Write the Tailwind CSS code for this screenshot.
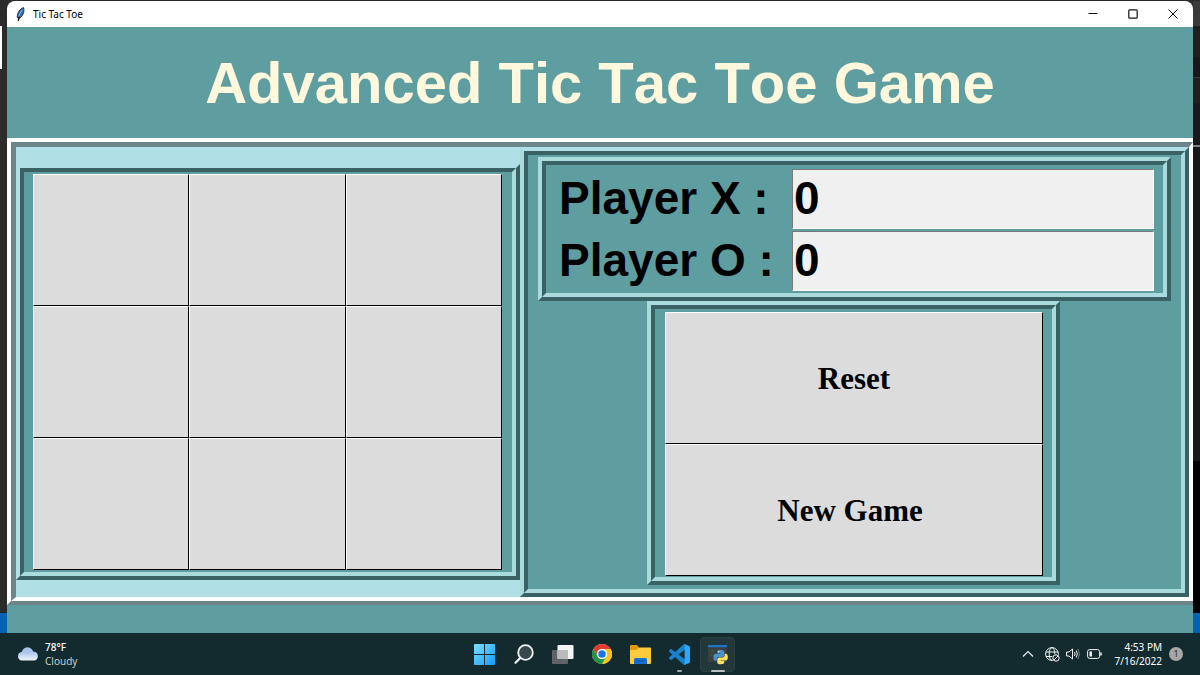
<!DOCTYPE html>
<html lang="en">
<head>
<meta charset="utf-8">
<meta name="viewport" content="width=device-width, initial-scale=1">
<title>Tic Tac Toe</title>
<script src="https://cdn.jsdelivr.net/npm/@tailwindcss/browser@4"></script>
</head>
<body class="min-h-screen flex flex-col bg-[#132b2e] font-['Liberation_Sans',Arial,sans-serif]">

<!-- Desktop with the application window -->
<div class="flex-1 flex bg-[#2b2b2b] pt-px">
  <div class="w-[7px] shrink-0 flex flex-col justify-between">
    <div class="mt-[25px] h-[43px] w-0.5 bg-white"></div>
    <div class="h-5 bg-[#0063b1]"></div>
  </div>

  <div class="flex-1 min-w-0 flex flex-col">
    <header class="h-[26px] flex items-center justify-between bg-white rounded-t-lg pl-[9px]">
      <div class="flex items-center gap-2">
        <svg class="w-[9px] h-[15px]" viewBox="0 0 9 15" aria-hidden="true">
          <path d="M7.600.600C4.200 1.500 1.200 5.500 1.200 10.500L2.800 11.600C6.500 10 8.800 5 7.600.600Z" fill="#2f6db5" stroke="#1c2733" stroke-width=".9"/>
          <path d="M6.600 2.500C4.500 5 3.200 7.500 2.600 10" stroke="#8fbdec" stroke-width="1" fill="none"/>
          <path d="M3.200 9.500L2.200 14" stroke="#111" stroke-width="1.200"/>
        </svg>
        <span class="text-[10px] leading-4 text-black font-['Noto_Sans','Open_Sans',sans-serif]">Tic Tac Toe</span>
      </div>
      <div class="flex h-full">
        <button class="w-10 grid place-items-center" aria-label="Minimize"><svg class="size-[10px]" viewBox="0 0 10 10" stroke="#111" fill="none"><path d="M.500 4.500H9.500"/></svg></button>
        <button class="w-10 grid place-items-center" aria-label="Maximize"><svg class="size-[10px]" viewBox="0 0 10 10" stroke="#111" stroke-width="1.200" fill="none"><rect x=".8" y=".8" width="8.400" height="8.400" rx="1"/></svg></button>
        <button class="w-10 grid place-items-center" aria-label="Close"><svg class="size-[10px]" viewBox="0 0 10 10" stroke="#111" fill="none"><path d="M.500.500L9.500 9.500M9.500.500L.500 9.500"/></svg></button>
      </div>
    </header>

    <main class="flex-1 bg-[#5f9ea0] pb-7">
      <h1 class="h-[111px] flex items-center justify-center text-[58px] leading-none font-bold text-[#fff8dc] [font-kerning:none]">Advanced Tic Tac Toe Game</h1>

      <div class="border-t-4 border-l-4 border-b-4 border-t-white border-l-white border-b-[#6c8589]">
        <div class="border-t-5 border-l-5 border-b-4 border-r-4 border-t-[#6c8589] border-l-[#6c8589] border-b-white border-r-white bg-[#b0dfe5] grid grid-cols-[504fr_669fr]">

          <!-- Board -->
          <section class="self-center border-4 border-t-[#b0dfe5] border-l-[#b0dfe5] border-r-[#3a6163] border-b-[#3a6163]" aria-label="Board">
            <div class="border-4 border-t-[#3a6163] border-l-[#3a6163] border-r-[#a9dadc] border-b-[#a9dadc] bg-[#5f9ea0] py-0.5 pl-[9px] pr-[10px]">
              <div class="grid grid-cols-3 auto-rows-[132px]">
                <button class="bg-[#dcdcdc] border border-t-white border-l-white border-r-black border-b-black" aria-label="Row 1, column 1"></button>
                <button class="bg-[#dcdcdc] border border-t-white border-l-white border-r-black border-b-black" aria-label="Row 1, column 2"></button>
                <button class="bg-[#dcdcdc] border border-t-white border-l-white border-r-black border-b-black" aria-label="Row 1, column 3"></button>
                <button class="bg-[#dcdcdc] border border-t-white border-l-white border-r-black border-b-black" aria-label="Row 2, column 1"></button>
                <button class="bg-[#dcdcdc] border border-t-white border-l-white border-r-black border-b-black" aria-label="Row 2, column 2"></button>
                <button class="bg-[#dcdcdc] border border-t-white border-l-white border-r-black border-b-black" aria-label="Row 2, column 3"></button>
                <button class="bg-[#dcdcdc] border border-t-white border-l-white border-r-black border-b-black" aria-label="Row 3, column 1"></button>
                <button class="bg-[#dcdcdc] border border-t-white border-l-white border-r-black border-b-black" aria-label="Row 3, column 2"></button>
                <button class="bg-[#dcdcdc] border border-t-white border-l-white border-r-black border-b-black" aria-label="Row 3, column 3"></button>
              </div>
            </div>
          </section>

          <!-- Scores and actions -->
          <section class="border-4 border-t-[#b0dfe5] border-l-[#a9dadc] border-r-[#3a6163] border-b-[#3a6163]" aria-label="Scores and actions">
            <div class="border-4 border-t-[#3a6163] border-l-[#3a6163] border-r-[#a9dadc] border-b-[#a9dadc] bg-[#5f9ea0] px-[10px] pt-0.5 pb-1 flex flex-col items-center">

              <div class="w-full border-4 border-t-[#a9dadc] border-l-[#a9dadc] border-r-[#3a6163] border-b-[#3a6163]">
                <div class="border-4 border-t-[#3a6163] border-l-[#3a6163] border-r-[#a9dadc] border-b-[#a9dadc] pt-1 pb-0.5 pl-[13px] pr-[9px] grid grid-cols-[233px_1fr] gap-y-0.5 items-center text-[46px] leading-none font-bold text-black [font-kerning:none]">
                  <label for="px" class="pb-[3px]">Player X :</label>
                  <input id="px" type="text" value="0" class="w-full min-w-0 h-[60px] bg-[#f0f0f0] border border-t-[#7a7a7a] border-l-[#7a7a7a] border-r-white border-b-white pl-px pb-[3px] outline-none">
                  <label for="po" class="pb-[3px]">Player O :</label>
                  <input id="po" type="text" value="0" class="w-full min-w-0 h-[60px] bg-[#f0f0f0] border border-t-[#7a7a7a] border-l-[#7a7a7a] border-r-white border-b-white pl-px pb-[3px] outline-none">
                </div>
              </div>

              <div class="w-[413px] max-w-full mr-0.5 border-4 border-t-[#a9dadc] border-l-[#a9dadc] border-r-[#3a6163] border-b-[#3a6163]">
                <div class="border-4 border-t-[#3a6163] border-l-[#3a6163] border-r-[#a9dadc] border-b-[#a9dadc] pt-[3px] pb-px pl-[10px] pr-[9px] flex flex-col text-[31px] leading-none font-bold text-black font-['Liberation_Serif','Times_New_Roman',serif]">
                  <button class="h-[132px] bg-[#dcdcdc] border border-t-white border-l-white border-r-black border-b-black">Reset</button>
                  <button class="h-[132px] pr-2 bg-[#dcdcdc] border border-t-white border-l-white border-r-black border-b-black">New Game</button>
                </div>
              </div>
            </div>
          </section>
        </div>
      </div>
    </main>
  </div>

  <div class="w-[7px] shrink-0 flex flex-col bg-black">
    <div class="h-[25px] bg-[#3a3a3a]"></div>
    <div class="h-[31px] bg-[#22201f]"></div>
    <div class="h-5 bg-[#181818]"></div>
    <div class="h-[26px] bg-[#22201f] border-t border-[#3a3a3a]"></div>
    <div class="h-[42px] bg-[#191919]"></div>
    <div class="h-0.5 bg-[#808080]"></div>
    <div class="h-[314px] bg-[#181818]"></div>
    <div class="mt-auto h-5 bg-[#0063b1]"></div>
  </div>
</div>

<!-- Taskbar -->
<footer class="h-[42px] grid grid-cols-[1fr_auto_1fr] items-center bg-[#132b2e] text-white text-[10px] leading-[14px] font-['Noto_Sans','Open_Sans',sans-serif]">
  <button class="justify-self-start flex items-center gap-1.5 pl-[17px] text-left">
    <svg class="w-[22px] h-[14px]" viewBox="0 0 22 14" aria-hidden="true">
      <defs><linearGradient id="cloud" x1="0" y1="0" x2="0" y2="1"><stop offset="0" stop-color="#a9c3ec"/><stop offset="1" stop-color="#eef3fc"/></linearGradient></defs>
      <circle cx="10.500" cy="6" r="5.800" fill="#a9c3ec"/>
      <path d="M4.500 5A5 5 0 0 1 9.500 6.500L13 6A4.500 4.500 0 0 1 17.500 4.800A4.500 4.500 0 0 1 17.500 13.500H5A4.300 4.300 0 0 1 4.500 5Z" fill="url(#cloud)"/>
    </svg>
    <span><span class="block font-medium">78°F</span><span class="block text-[#c5cfd0]">Cloudy</span></span>
  </button>

  <nav class="flex items-center" aria-label="Taskbar">
    <button class="w-[39px] h-9 grid place-items-center" aria-label="Start">
      <svg class="size-[21px]" viewBox="0 0 21 21"><defs><linearGradient id="win" x1="0" y1="0" x2="1" y2="1"><stop offset="0" stop-color="#7be0ff"/><stop offset="1" stop-color="#129bf5"/></linearGradient></defs><path d="M0 1Q0 0 1 0H10V10H0ZM11 0H20Q21 0 21 1V10H11ZM0 11H10V21H1Q0 21 0 20ZM11 11H21V20Q21 21 20 21H11Z" fill="url(#win)"/></svg>
    </button>
    <button class="w-[39px] h-9 grid place-items-center" aria-label="Search">
      <svg class="size-5" viewBox="0 0 20 20"><circle cx="11.500" cy="8.500" r="7.300" fill="#36494c" stroke="#f2f2f2" stroke-width="1.800"/><path d="M6.200 14L1.500 18.700" stroke="#f2f2f2" stroke-width="2.200" stroke-linecap="round"/></svg>
    </button>
    <button class="w-[39px] h-9 grid place-items-center" aria-label="Task view">
      <svg class="w-[22px] h-[19px]" viewBox="0 0 22 19"><rect x="0" y="5" width="16" height="14" rx="1" fill="#616466"/><rect x="5.500" y="0" width="16" height="14" rx="1" fill="#f5f5f5"/><path d="M5.500 5H16V14H6.500Q5.500 14 5.500 13Z" fill="#b9bbbc"/></svg>
    </button>
    <button class="w-[39px] h-9 grid place-items-center" aria-label="Chrome">
      <svg class="size-5" viewBox="0 0 48 48"><circle cx="24" cy="24" r="24" fill="#fff"/><path d="M3.200 12A24 24 0 0 1 44.800 12H24A12 12 0 0 0 13.600 30Z" fill="#e33b2e"/><path d="M44.800 12A24 24 0 0 1 24 48L34.400 30A12 12 0 0 0 24 12Z" fill="#fbc116"/><path d="M3.200 12A24 24 0 0 0 24 48L34.400 30A12 12 0 0 1 13.600 30Z" fill="#229342"/><circle cx="24" cy="24" r="12" fill="#fff"/><circle cx="24" cy="24" r="9" fill="#1a73e8"/></svg>
    </button>
    <button class="w-[39px] h-9 grid place-items-center" aria-label="File Explorer">
      <svg class="w-[21px] h-[19px]" viewBox="0 0 21 19"><path d="M0 1Q0 0 1 0H7L9 2.500V6H0Z" fill="#e09b0b"/><path d="M0 5H6.500L9 2.500H20Q21 2.500 21 3.500V18Q21 19 20 19H1Q0 19 0 18Z" fill="#fdcb3e"/><path d="M4 19V14.500Q4 13 5.500 13H15.500Q17 13 17 14.500V19Z" fill="#1572d3"/><path d="M6.500 16H14.500" stroke="#0b4fa0"/></svg>
    </button>
    <button class="relative w-[39px] h-9 grid place-items-center" aria-label="Visual Studio Code">
      <svg class="size-[21px]" viewBox="0 0 24 24"><path fill="#1583d0" d="M23.150 2.587L18.210.210a1.494 1.494 0 0 0-1.705.290l-9.460 8.630-4.120-3.128a.999.999 0 0 0-1.276.057L.327 7.261A1 1 0 0 0 .326 8.740L3.899 12 .326 15.260a1 1 0 0 0 .001 1.479L1.650 17.940a.999.999 0 0 0 1.276.057l4.120-3.128 9.460 8.630a1.492 1.492 0 0 0 1.704.290l4.942-2.377A1.500 1.500 0 0 0 24 20.060V3.939a1.500 1.500 0 0 0-.850-1.352zm-5.146 14.861L10.826 12l7.178-5.448v10.896z"/><path fill="#2fa8f3" d="M18 .2L23.150 2.587A1.500 1.500 0 0 1 24 3.939V20.060A1.500 1.500 0 0 1 23.150 21.412L18 23.800Z"/></svg>
      <span class="absolute bottom-0 w-[5px] h-0.5 rounded-full bg-[#a3acad]"></span>
    </button>
    <button class="relative w-[35px] h-[35px] ml-px grid place-items-center rounded bg-[#22383b] border border-[#2b4144]" aria-label="Python">
      <svg class="w-[21px] h-[21px]" viewBox="0 0 21 21"><rect x="1" y="1" width="19" height="17" fill="#3b3f42"/><rect x="1" y="1" width="19" height="2.200" fill="#1b75c9"/><path d="M3.500 6.500H8M3.500 9H7M3.500 11.500H6" stroke="#36603a"/><g transform="translate(6.500 6) scale(.6)"><path fill="#4b93cf" d="M14.250.180l.9.200.730.260.590.300.450.320.340.340.250.340.160.330.100.300.040.260.020.200-.010.130V8.500l-.050.630-.130.550-.210.460-.260.380-.300.310-.330.250-.350.190-.350.140-.330.100-.300.070-.260.040-.210.020H8.770l-.690.050-.590.140-.500.220-.410.270-.330.320-.270.350-.200.360-.150.370-.100.350-.070.320-.040.270-.020.210v3.060H3.170l-.210-.030-.280-.070-.320-.120-.350-.180-.360-.260-.360-.360-.350-.460-.320-.590-.280-.730-.210-.880-.140-1.050-.050-1.230.060-1.220.160-1.040.240-.870.320-.710.360-.570.400-.440.420-.330.420-.240.400-.160.360-.100.320-.050.240-.010h.160l.060.010h8.160v-.830H6.180l-.010-2.750-.020-.370.050-.340.110-.310.170-.280.250-.260.310-.230.380-.200.440-.180.510-.150.580-.120.640-.100.710-.060.770-.040.840-.020 1.270.050z"/><path transform="rotate(180 12 12)" fill="#ffe05a" d="M14.250.180L16.500 1L17.700 2.500V8.500L17 10.200L14.800 11.300H8.770L6.500 12.300L5.400 14.500V17.900H3.170L1 16.500L0 12.500L.6 8.500L2.800 6.300H12V5.500H6.180V2.500L7.500.900L12 .1Z"/><circle cx="8.700" cy="2.800" r="1" fill="#fff"/><circle cx="15.300" cy="21.200" r="1" fill="#fff"/></g></svg>
      <span class="absolute -bottom-px w-[14px] h-0.5 rounded-full bg-[#b9c0c0]"></span>
    </button>
  </nav>

  <div class="justify-self-end flex items-center pr-[17px]">
    <button aria-label="Show hidden icons" class="mr-[11px]"><svg class="w-3 h-2" viewBox="0 0 12 8" fill="none" stroke="#e8eeee" stroke-width="1.200"><path d="M1 6.500L6 1.500L11 6.500"/></svg></button>
    <button class="flex items-center gap-1.5 mr-[13px]" aria-label="Network, volume and battery">
      <svg class="size-[15px]" viewBox="0 0 15 15" fill="none" stroke="#f2f5f5"><circle cx="7" cy="7" r="6.400"/><ellipse cx="7" cy="7" rx="2.800" ry="6.400"/><path d="M1 5H13M1 9.500H8"/><circle cx="11" cy="11" r="4" fill="#132b2e" stroke="none"/><circle cx="11" cy="11" r="3.200"/><path d="M8.900 13.100L13.100 8.900"/></svg>
      <svg class="w-[14px] h-3" viewBox="0 0 14 12" fill="none" stroke="#f2f5f5"><path d="M.6 4H3L6.500 1V11L3 8H.6Z"/><path d="M8.500 4Q9.700 6 8.500 8M10.300 2.500Q12.400 6 10.300 9.500"/><path d="M12 1Q15 6 12 11" stroke="#6c7d7f"/></svg>
      <svg class="w-[15px] h-[10px] ml-px" viewBox="0 0 15 10" fill="none" stroke="#f2f5f5"><rect x=".6" y=".6" width="12" height="8.800" rx="2"/><path d="M2.500 2.500H5V7.500H2.500Z" fill="#f2f5f5" stroke="none"/><path d="M14 3.500V6.500" stroke-width="1.500"/></svg>
    </button>
    <button class="text-right mr-[7px]"><time datetime="2022-07-16T16:53"><span class="block">4:53 PM</span><span class="block">7/16/2022</span></time></button>
    <button class="size-[14px] rounded-full bg-[#a8a6a3] text-[#1b2d30] text-[9px] leading-[14px]" aria-label="1 notification">1</button>
  </div>
</footer>
</body>
</html>
